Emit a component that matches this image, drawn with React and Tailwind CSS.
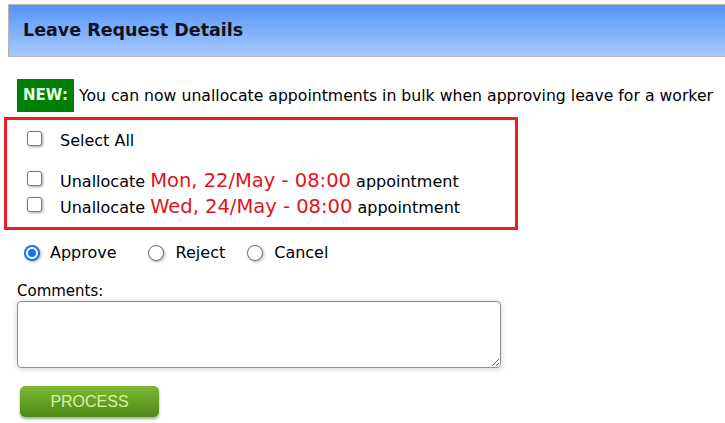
import React from 'react';

const font = { fontFamily: '"DejaVu Sans", Verdana, sans-serif' };

const Checkbox = () => (
  <input
    type="checkbox"
    className="appearance-none block w-[15px] h-[15px] border border-[#7a7a7a] rounded-[3px] bg-white shadow-[1px_1px_3px_rgba(0,0,0,0.35)] shrink-0"
  />
);

const Radio = ({ checked }) =>
  checked ? (
    <span className="w-[16px] h-[16px] rounded-full bg-[#1a73e8] flex items-center justify-center shrink-0 shadow-[1px_1px_3px_rgba(0,0,0,0.3)]">
      <span className="w-[12px] h-[12px] rounded-full bg-white flex items-center justify-center">
        <span className="block w-[8px] h-[8px] rounded-full bg-[#1a73e8]" />
      </span>
    </span>
  ) : (
    <span className="block w-[16px] h-[16px] rounded-full border border-[#6f6f6f] bg-white shrink-0 shadow-[1px_1px_3px_rgba(0,0,0,0.3)]" />
  );

const App = () => {
  return (
    <div className="w-[725px] h-[423px] overflow-hidden bg-white text-black" style={font}>
      {/* Title bar */}
      <div className="pl-2 pt-1">
        <div className="h-[53px] border-t border-b border-l border-[#b4b4b4] bg-gradient-to-b from-[#5694f8] to-[#a6c9fb] flex items-center pl-[14px]">
          <h2 className="text-[17.5px] font-bold text-[#111122]">Leave Request Details</h2>
        </div>
      </div>

      {/* Notice */}
      <div className="mt-[22px] pl-[17px] flex items-center">
        <span className="bg-[#008000] text-[#e6ffe6] font-bold text-[15px] h-[33px] px-[6px] flex items-center">NEW:</span>
        <span className="ml-[5px] text-[15.7px]">You can now unallocate appointments in bulk when approving leave for a worker</span>
      </div>

      {/* Unallocate box */}
      <div className="ml-[4px] mt-[5px] w-[514px] h-[113px] border-[3px] border-[#ec1c24] pl-[20px] pt-[8px]">
        <label className="flex items-center h-[20px]">
          <Checkbox />
          <span className="ml-[18px] text-[16px] mt-[5px]">Select All</span>
        </label>
        <label className="flex items-center mt-[19px] h-[22px]">
          <Checkbox />
          <span className="ml-[18px] text-[16px] mt-[6px]">
            Unallocate <span className="text-[#e3131b] text-[19.5px]">Mon, 22/May - 08:00</span> appointment
          </span>
        </label>
        <label className="flex items-center mt-[4px] h-[22px]">
          <Checkbox />
          <span className="ml-[18px] text-[16px] mt-[5px]">
            Unallocate <span className="text-[#e3131b] text-[19.5px]">Wed, 24/May - 08:00</span> appointment
          </span>
        </label>
      </div>

      {/* Decision */}
      <div className="flex items-center pl-[24px] mt-[11px] text-[16px]">
        <Radio checked />
        <span className="ml-[10px]">Approve</span>
        <span className="ml-[31px]"><Radio /></span>
        <span className="ml-[12px]">Reject</span>
        <span className="ml-[22px]"><Radio /></span>
        <span className="ml-[11px]">Cancel</span>
      </div>

      <div className="pl-[17px] mt-[17px] text-[15px] leading-[18px]">Comments:</div>
      <div className="pl-[17px] mt-[1px] flex">
        <textarea className="block w-[484px] h-[67px] border border-[#8f8f8f] rounded-[4px] shadow-[0_1px_6px_rgba(0,0,0,0.18)] resize-y outline-none" />
      </div>

      <div className="pl-[20px] mt-[18px]">
        <button
          className="block w-[139px] h-[31px] rounded-[5px] bg-gradient-to-b from-[#80b936] to-[#4b8a15] text-[#d9f0a3] text-[16px] shadow-[0_2px_3px_rgba(0,0,0,0.35)]"
          style={{ fontFamily: '"Liberation Sans", Arial, sans-serif' }}
        >
          PROCESS
        </button>
      </div>
    </div>
  );
};

export default App;
